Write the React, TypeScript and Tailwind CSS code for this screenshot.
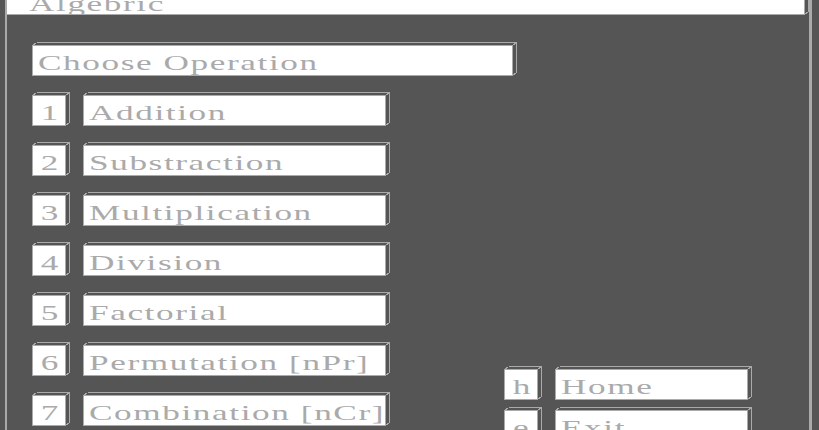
import React from "react";

const FONT =
  "font-['Liberation_Serif',serif] text-[22px] leading-[22px] text-[#aaaaaa] tracking-[1px]";

function Extrude({ w, h }: { w: number; h: number }) {
  const W = w;
  const H = h;
  const d = `M0.5,3.5 L4.5,0.5 M4.5,0.5 H${W + 3.5} M${W - 0.5},3.5 L${W + 3.5},0.5 M${W + 3.5},0.5 V${H - 0.5} M${W - 0.5},${H + 2.5} L${W + 3.5},${H - 0.5}`;
  return (
    <svg
      className="pointer-events-none absolute left-0 top-[-3px] overflow-visible"
      width={W + 4}
      height={H + 3}
      shapeRendering="crispEdges"
    >
      <path d={d} stroke="#aaaaaa" strokeWidth={1} fill="none" />
    </svg>
  );
}

function Box3D({
  w,
  h,
  className,
  children,
}: {
  w: number;
  h: number;
  className: string;
  children?: React.ReactNode;
}) {
  return (
    <div className={`relative shrink-0 ${className}`}>
      <div className="h-full w-full overflow-hidden border border-[#aaaaaa] bg-white">
        {children}
      </div>
      <Extrude w={w} h={h} />
    </div>
  );
}

function Text({ children }: { children: React.ReactNode }) {
  return (
    <div className={`pl-[5px] pt-[6px] ${FONT}`}>
      <span className="inline-block origin-left scale-x-[1.6] whitespace-nowrap">
        {children}
      </span>
    </div>
  );
}

function Key({ children }: { children: React.ReactNode }) {
  return (
    <div className={`pt-[6px] text-center ${FONT}`}>
      <span className="inline-block origin-center scale-x-[1.6] whitespace-nowrap pl-[1px]">
        {children}
      </span>
    </div>
  );
}

function Row({ k, label }: { k: string; label: string }) {
  return (
    <div className="flex gap-[17px]">
      <Box3D w={34} h={31} className="h-[31px] w-[34px]">
        <Key>{k}</Key>
      </Box3D>
      <Box3D w={303} h={31} className="h-[31px] w-[303px]">
        <Text>{label}</Text>
      </Box3D>
    </div>
  );
}

function SideRow({ k, label }: { k: string; label: string }) {
  return (
    <div className="flex gap-[17px]">
      <Box3D w={34} h={31} className="h-[31px] w-[34px]">
        <Key>{k}</Key>
      </Box3D>
      <Box3D w={193} h={31} className="h-[31px] w-[193px]">
        <Text>{label}</Text>
      </Box3D>
    </div>
  );
}

export default function App() {
  const items = [
    ["1", "Addition"],
    ["2", "Substraction"],
    ["3", "Multiplication"],
    ["4", "Division"],
    ["5", "Factorial"],
    ["6", "Permutation [nPr]"],
    ["7", "Combination [nCr]"],
  ];
  return (
    <div className="h-[430px] w-[819px] overflow-hidden bg-[#555555]">
      <div className="ml-[5px] h-[430px] w-[807px] border-l-2 border-r-[3px] border-[#aaaaaa]">
        <div className="relative h-[15px] w-[798px]">
          <div className="h-full w-full overflow-hidden border-b border-r border-[#aaaaaa] bg-white">
            <div className={`mt-[-7px] pl-[22px] ${FONT}`}>
              <span className="inline-block origin-left scale-x-[1.6] whitespace-nowrap">
                Algebric
              </span>
            </div>
          </div>
          <svg
            className="pointer-events-none absolute left-0 top-[-3px] overflow-visible"
            width={802}
            height={18}
            shapeRendering="crispEdges"
          >
            <path
              d="M801.5,0 V14.5 M797.5,17.5 L801.5,14.5"
              stroke="#aaaaaa"
              strokeWidth={1}
              fill="none"
            />
          </svg>
        </div>

        <div className="pl-[25px] pt-[30px]">
          <Box3D w={481} h={31} className="h-[31px] w-[481px]">
            <Text>Choose Operation</Text>
          </Box3D>

          <div className="mt-[19px] flex">
            <div className="flex flex-col gap-[19px]">
              {items.map(([k, l]) => (
                <Row key={k} k={k} label={l} />
              ))}
            </div>
            <div className="ml-[118px] mt-[274px] flex flex-col gap-[10px]">
              <SideRow k="h" label="Home" />
              <SideRow k="e" label="Exit" />
            </div>
          </div>
        </div>
      </div>
    </div>
  );
}
